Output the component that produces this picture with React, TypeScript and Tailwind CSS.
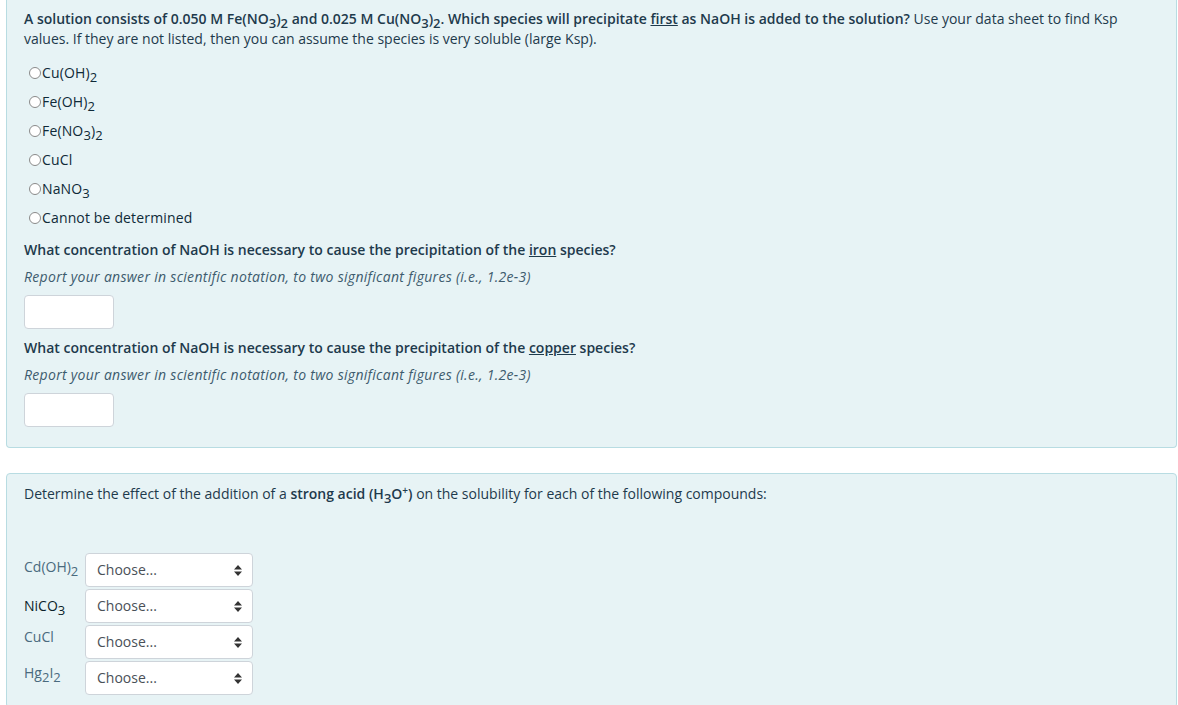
import { ReactNode } from 'react';

const Sub = ({ children }: { children: ReactNode }) => (
  <span className="relative top-[4px] text-[13px]">{children}</span>
);

const OPTIONS: ReactNode[] = [
  <>Cu(OH)<Sub>2</Sub></>,
  <>Fe(OH)<Sub>2</Sub></>,
  <>Fe(NO<Sub>3</Sub>)<Sub>2</Sub></>,
  <>CuCl</>,
  <>NaNO<Sub>3</Sub></>,
  <>Cannot be determined</>,
];

const SELECTS: { label: ReactNode; cls: string }[] = [
  { label: <>Cd(OH)<Sub>2</Sub></>, cls: 'self-start pt-[4px] text-[#4a6a7e]' },
  { label: <>NiCO<Sub>3</Sub></>, cls: 'self-center text-[#0b1f2a]' },
  { label: <>CuCl</>, cls: 'self-start pt-[2px] text-[#4a6a7e]' },
  { label: <>Hg<Sub>2</Sub>I<Sub>2</Sub></>, cls: 'self-start pt-[2px] text-[#4a6a7e]' },
];

function Radio({ children }: { children: ReactNode }) {
  return (
    <div className="flex items-center h-[29px] pl-[5px] text-[#0f2a38] tracking-[0.15px]">
      <span className="w-[12px] h-[12px] rounded-full border border-[#8a8a8a] bg-white mr-[1px]" />
      <span>{children}</span>
    </div>
  );
}

function Select() {
  return (
    <div className="w-[168px] h-[34px] bg-white border border-[#ced4da] rounded-[4px] flex items-center justify-between pl-[11px] pr-[10px] text-[#495057]">
      <span>Choose...</span>
      <svg width="8" height="11" viewBox="0 0 8 11">
        <path d="M4 0 L8 4.5 H0 Z M4 11 L8 6.5 H0 Z" fill="#333" />
      </svg>
    </div>
  );
}

export default function App() {
  return (
    <div className="min-h-[705px] bg-white pl-[6px] pr-[1px] text-[14px] leading-[20px] text-[#1e3a4c]" style={{ fontFamily: '"Open Sans", sans-serif' }}>
      <div className="bg-[#e7f3f5] border border-t-0 border-[#b8dce2] rounded-b-[4px] pl-[17px] pr-[16px] pt-[9px] pb-[20px]">
        <p>
          <b className="font-semibold">A solution consists of 0.050 M Fe(NO<Sub>3</Sub>)<Sub>2</Sub> and 0.025 M Cu(NO<Sub>3</Sub>)<Sub>2</Sub>. Which species will precipitate <u>first</u> as NaOH is added to the solution?</b>{' '}
          Use your data sheet to find Ksp values. If they are not listed, then you can assume the species is very soluble (large Ksp).
        </p>
        <div className="mt-[9px]">
          {OPTIONS.map((o, i) => (
            <Radio key={i}>{o}</Radio>
          ))}
        </div>
        <p className="mt-[8px] font-semibold">
          What concentration of NaOH is necessary to cause the precipitation of the <u>iron</u> species?
        </p>
        <p className="mt-[7px] italic text-[#3d5b6e] tracking-[0.3px]">
          Report your answer in scientific notation, to two significant figures (i.e., 1.2e-3)
        </p>
        <div className="mt-[8px] w-[90px] h-[34px] bg-white border border-[#ced4da] rounded-[4px]" />
        <p className="mt-[9px] font-semibold">
          What concentration of NaOH is necessary to cause the precipitation of the <u>copper</u> species?
        </p>
        <p className="mt-[7px] italic text-[#3d5b6e] tracking-[0.3px]">
          Report your answer in scientific notation, to two significant figures (i.e., 1.2e-3)
        </p>
        <div className="mt-[8px] w-[90px] h-[34px] bg-white border border-[#ced4da] rounded-[4px]" />
      </div>

      <div className="mt-[25px] bg-[#e7f3f5] border border-[#b8dce2] rounded-[4px] pl-[17px] pr-[16px] pt-[10px] pb-[12px]">
        <p>
          Determine the effect of the addition of a <b className="font-semibold">strong acid (H<Sub>3</Sub>O<sup className="text-[10px]">+</sup>)</b> on the solubility for each of the following compounds:
        </p>
        <div className="mt-[49px] flex flex-col gap-[2px]">
          {SELECTS.map((s, i) => (
            <div key={i} className="flex items-start h-[34px]">
              <div className={`w-[61px] ${s.cls}`}>{s.label}</div>
              <Select />
            </div>
          ))}
        </div>
      </div>
    </div>
  );
}
